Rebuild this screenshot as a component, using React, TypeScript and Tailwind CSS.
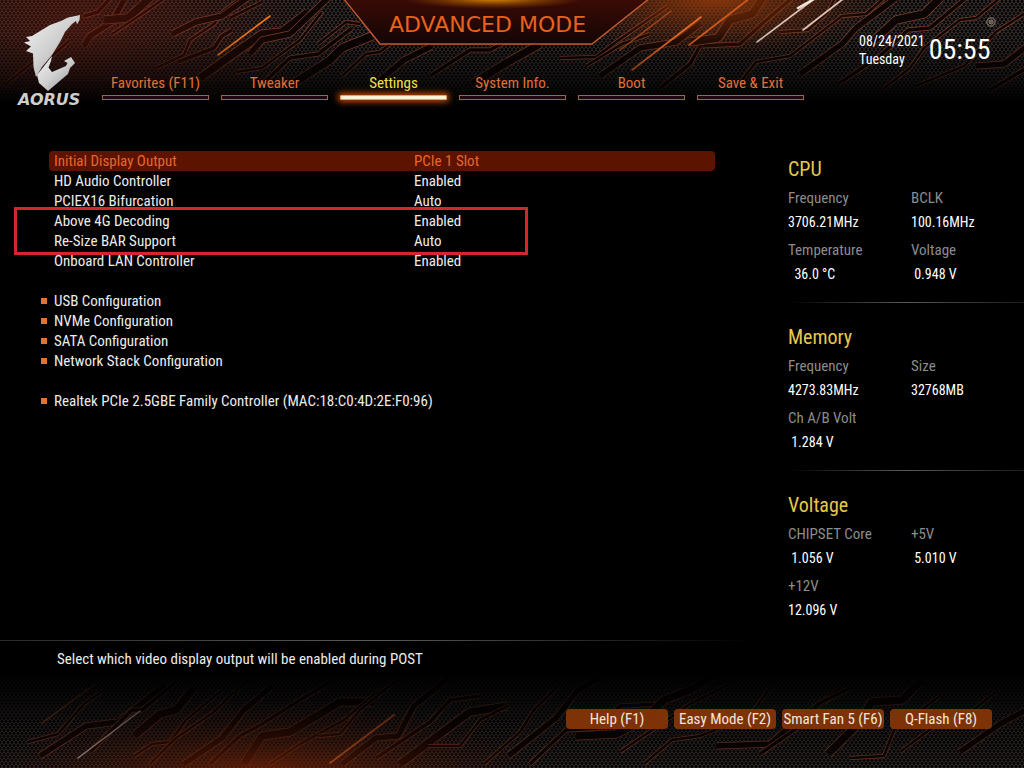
import React from "react";

const tabs = ["Favorites (F11)", "Tweaker", "Settings", "System Info.", "Boot", "Save & Exit"];

const settings = [
  { name: "Initial Display Output", value: "PCIe 1 Slot" },
  { name: "HD Audio Controller", value: "Enabled" },
  { name: "PCIEX16 Bifurcation", value: "Auto" },
  { name: "Above 4G Decoding", value: "Enabled" },
  { name: "Re-Size BAR Support", value: "Auto" },
  { name: "Onboard LAN Controller", value: "Enabled" },
];

const subPages = [
  "USB Configuration",
  "NVMe Configuration",
  "SATA Configuration",
  "Network Stack Configuration",
];

const monitors = [
  {
    title: "CPU",
    items: [
      { label: "Frequency", value: "3706.21MHz" },
      { label: "BCLK", value: "100.16MHz" },
      { label: "Temperature", value: "  36.0 °C" },
      { label: "Voltage", value: " 0.948 V" },
    ],
  },
  {
    title: "Memory",
    items: [
      { label: "Frequency", value: "4273.83MHz" },
      { label: "Size", value: "32768MB" },
      { label: "Ch A/B Volt", value: " 1.284 V" },
    ],
  },
  {
    title: "Voltage",
    items: [
      { label: "CHIPSET Core", value: " 1.056 V" },
      { label: "+5V", value: " 5.010 V" },
      { label: "+12V", value: "12.096 V" },
    ],
  },
];

const actions = ["Help (F1)", "Easy Mode (F2)", "Smart Fan 5 (F6)", "Q-Flash (F8)"];

const headerTraces = [
  "M6 84L38 58L52 56L70 40",
  "M84 46L90 36L112 22L124 0",
  "M84 16L98 12L112 -4",
  "M104 20L128 18L152 -4",
  "M112 34L136 18L168 -4",
  "M156 68L184 55L190 40L214 24L222 12L244 -4",
  "M172 34L196 22L222 16L250 -4",
  "M178 62L214 48L222 36L232 30",
  "M200 78L236 52L262 34L282 32L308 12",
  "M236 72L262 68L300 40L322 12",
  "M230 18L262 2",
  "M250 54L262 40L290 34L330 -4",
  "M262 84L290 58L318 54L352 28",
  "M286 88L330 60L342 48L372 36",
  "M318 44L346 22L360 24",
  "M342 76L366 54L380 52L398 38",
  "M380 80L404 60L432 46",
  "M430 76L470 50L490 50L512 38",
  "M472 84L508 62L540 44",
  "M560 58L596 57L616 42L668 6",
  "M586 66L622 44L650 34",
  "M600 76L640 48L676 42L700 24",
  "M660 88L690 64L700 46L740 44L764 22L792 -2",
  "M690 42L718 38L730 20L752 14L764 -4",
  "M742 80L756 62L790 56L816 36L842 16L866 14L884 -2",
  "M780 32L808 30L828 12L836 -4",
  "M800 74L842 44L856 28L896 -2",
  "M838 84L880 56L908 30L930 28L966 -2",
  "M870 44L896 20L924 14L940 -2",
  "M882 90L910 68L924 48L960 20L976 18L1000 -2",
  "M916 86L964 66L996 32L1030 10",
  "M976 66L1004 64L1030 44",
  "M990 90L1030 66",
];

const footerTraces = [
  "M28 82L58 74L84 44L104 30",
  "M40 96L86 66L118 62L166 24",
  "M90 92L132 50L142 50L176 22",
  "M134 76L160 54L176 50L194 28",
  "M134 96L152 84L170 82L186 60L222 30",
  "M150 104L176 78L214 52L232 34L258 12",
  "M184 104L222 78L244 50L272 26",
  "M210 104L240 76L262 64L300 40L330 22",
  "M244 104L262 76L290 72L340 42L374 42",
  "M270 104L300 84L344 60L372 36L400 20",
  "M318 76L340 74L360 50L392 24",
  "M342 104L376 78L398 76L414 46L434 30L452 14",
  "M376 98L430 62L450 40L480 36",
  "M400 104L440 74L470 52L508 46",
  "M428 86L460 86L480 60L508 46",
  "M484 104L520 72L534 50L560 24",
  "M508 96L556 58L578 30L600 18",
  "M530 104L566 70L598 68L620 46L660 44L700 16",
  "M576 76L616 74L644 60L664 40L690 30L720 12",
  "M620 92L664 62L690 44L730 24",
  "M644 104L672 80L700 76L750 56L770 28",
  "M716 86L770 84L800 58L840 30",
  "M760 94L800 66L818 44L850 28",
  "M828 94L856 66L872 42L902 40L920 22",
  "M850 98L884 96L894 70L940 36",
  "M900 92L940 62L968 54L996 32",
  "M960 92L1000 64L1030 48",
];

type Streak = { d: string; color: string; width: number };

const headerStreaks: Streak[] = [
  { d: "M218 55L270 16", color: "#f07418", width: 1.6 },
  { d: "M620 50L671 11", color: "#a84616", width: 1.4 },
  { d: "M632 70L701 17", color: "#ee6a20", width: 1.6 },
  { d: "M689 45L750 -2", color: "#d45a18", width: 1.6 },
  { d: "M757 42L814 -1", color: "#dcc4b8", width: 1.6 },
  { d: "M798 8L816 -2", color: "#f3e4dc", width: 2.5 },
  { d: "M803 30L843 -1", color: "#dcc4b8", width: 1.6 },
];

const footerStreaks: Streak[] = [
  { d: "M42 63L95 24", color: "#8a3c24", width: 1.4 },
  { d: "M78 98L140 51", color: "#b09c96", width: 1.4 },
  { d: "M330 103L394 55", color: "#b84c1e", width: 2 },
];

function Streaks({ items, id }: { items: Streak[]; id: string }) {
  return (
    <g filter={`url(#${id}-soft)`}>
      {items.map((s) => (
        <path key={s.d} d={s.d} stroke={s.color} strokeWidth={s.width} strokeLinecap="round" fill="none" />
      ))}
    </g>
  );
}

function Defs({ id }: { id: string }) {
  return (
    <>
      <pattern id={`${id}-mesh`} width="4" height="6" patternUnits="userSpaceOnUse">
        <rect width="4" height="6" fill="#3c3432" />
        <ellipse cx="2" cy="1.5" rx="1.5" ry="1.4" fill="#050303" />
        <ellipse cx="0" cy="4.5" rx="1.5" ry="1.4" fill="#050303" />
        <ellipse cx="4" cy="4.5" rx="1.5" ry="1.4" fill="#050303" />
      </pattern>
      <filter id={`${id}-soft`} x="-10%" y="-10%" width="120%" height="120%">
        <feGaussianBlur stdDeviation="0.4" />
      </filter>
    </>
  );
}

const channelWidths = [4, 7, 5, 9, 4];

function Traces({ paths }: { paths: string[] }) {
  return (
    <g fill="none" strokeLinejoin="bevel">
      {paths.map((d, i) => {
        const width = channelWidths[i % channelWidths.length];
        return (
          <g key={d}>
            <path d={d} stroke="#84402a" strokeWidth={width} />
            <path d={d} stroke="#0b0504" strokeWidth={width - 1.4} />
          </g>
        );
      })}
    </g>
  );
}

function HeaderBackdrop() {
  return (
    <svg
      aria-hidden="true"
      viewBox="0 0 1024 108"
      preserveAspectRatio="xMidYMin slice"
      className="pointer-events-none absolute inset-x-0 top-0 -z-10 h-[108px] w-full"
    >
      <defs>
        <Defs id="head" />
        <radialGradient id="head-red" cx="80" cy="20" r="230" gradientUnits="userSpaceOnUse">
          <stop offset="0" stopColor="#6a1a0c" stopOpacity="0.5" />
          <stop offset="1" stopColor="#6a1a0c" stopOpacity="0" />
        </radialGradient>
        <radialGradient id="head-orange" cx="0" cy="0" r="1" gradientUnits="userSpaceOnUse" gradientTransform="translate(715 -4) scale(170 64)">
          <stop offset="0" stopColor="#a84008" stopOpacity="0.8" />
          <stop offset="1" stopColor="#702408" stopOpacity="0" />
        </radialGradient>
        <linearGradient id="head-fade" x1="0" y1="0" x2="0" y2="1">
          <stop offset="0.3" stopColor="#000" stopOpacity="0" />
          <stop offset="0.7" stopColor="#000" stopOpacity="0.5" />
          <stop offset="0.95" stopColor="#000" />
        </linearGradient>
      </defs>
      <rect width="1024" height="108" fill="url(#head-mesh)" />
      <Traces paths={headerTraces} />
      <rect width="1024" height="108" fill="url(#head-red)" />
      <rect width="1024" height="108" fill="url(#head-orange)" />
      <Streaks items={headerStreaks} id="head" />
      <rect width="1024" height="108" fill="url(#head-fade)" />
    </svg>
  );
}

function FooterBackdrop() {
  return (
    <svg
      aria-hidden="true"
      viewBox="0 0 1024 108"
      preserveAspectRatio="xMidYMax slice"
      className="pointer-events-none absolute inset-x-0 bottom-0 -z-10 h-[108px] w-full"
    >
      <defs>
        <Defs id="foot" />
        <radialGradient id="foot-red" cx="0" cy="0" r="1" gradientUnits="userSpaceOnUse" gradientTransform="translate(265 112) scale(270 74)">
          <stop offset="0" stopColor="#8c2806" stopOpacity="0.75" />
          <stop offset="1" stopColor="#5a1804" stopOpacity="0" />
        </radialGradient>
        <linearGradient id="foot-fade" x1="0" y1="0" x2="0" y2="1">
          <stop offset="0.12" stopColor="#000" />
          <stop offset="0.55" stopColor="#000" stopOpacity="0.5" />
          <stop offset="1" stopColor="#000" stopOpacity="0.15" />
        </linearGradient>
      </defs>
      <rect width="1024" height="108" fill="url(#foot-mesh)" />
      <Traces paths={footerTraces} />
      <rect width="1024" height="108" fill="url(#foot-red)" />
      <Streaks items={footerStreaks} id="foot" />
      <rect width="1024" height="108" fill="url(#foot-fade)" />
    </svg>
  );
}

function Logo() {
  return (
    <div className="flex w-[102px] shrink-0 flex-col items-start pt-[14px] pl-[18px]">
      <svg aria-hidden="true" viewBox="0 0 60 78" className="ml-[5px] h-[78px] w-[60px]">
        <defs>
          <linearGradient id="falcon" x1="0" y1="0" x2="1" y2="1">
            <stop offset="0" stopColor="#f4f4f4" />
            <stop offset="0.5" stopColor="#cfcfd0" />
            <stop offset="1" stopColor="#8e8e90" />
          </linearGradient>
        </defs>
        <path
          fill="url(#falcon)"
          d="M57 1L45 3.5L38 7L27 11L9 22L3 23L7 27L1 28.5L8 32.5L3 37L10 39.5L10.5 53L13 63L19 53L29 41L37 28L42 18L49 10L53 7L54 10.5L56.5 6Z"
        />
        <path
          fill="url(#falcon)"
          d="M29 42L14 61L16 69L25 77L45 60L47 54L52 49L48 43L41 47L44.5 49L43 52L29 58L25.5 53.5L28 47Z"
        />
      </svg>
      <span className="font-['DejaVu_Sans',sans-serif] text-[16px] leading-[16px] font-bold text-[#cfcfcf] italic">
        AORUS
      </span>
    </div>
  );
}

function Header() {
  return (
    <header className="flex items-start">
      <Logo />
      <div className="flex-1">
        <div className="pl-[30px]">
          <div className="relative mx-auto h-[48px] w-[304px]">
            <svg aria-hidden="true" viewBox="0 0 304 48" className="absolute inset-0 -z-10 h-full w-full">
              <defs>
                <radialGradient id="plate-glow" cx="0" cy="0" r="1" gradientUnits="userSpaceOnUse" gradientTransform="translate(150 -1) scale(90 10)">
                  <stop offset="0" stopColor="#e08c00" />
                  <stop offset="1" stopColor="#a05000" stopOpacity="0" />
                </radialGradient>
                <linearGradient id="plate" x1="0" y1="0" x2="0" y2="1">
                  <stop offset="0" stopColor="#3c0a04" stopOpacity="0.95" />
                  <stop offset="1" stopColor="#120303" stopOpacity="0.9" />
                </linearGradient>
              </defs>
              <path d="M-1 -2L36 44H248L306 -2Z" fill="url(#plate)" stroke="#c55a30" strokeWidth="1.4" />
              <path d="M1 0H303L288 12H11Z" fill="url(#plate-glow)" />
            </svg>
            <h1 className="pt-3 pr-4 text-center font-['DejaVu_Sans',sans-serif] text-[22px] leading-[26px] whitespace-nowrap text-[#e8621c]">
              ADVANCED MODE
            </h1>
          </div>
        </div>
        <nav className="mt-[25px] flex gap-3">
          {tabs.map((tab) => {
            const active = tab === "Settings";
            return (
              <button
                key={tab}
                type="button"
                aria-current={active ? "page" : undefined}
                className={
                  active
                    ? "flex w-[107px] flex-col gap-[2px] text-[#f2e24a]"
                    : "flex w-[107px] flex-col gap-[2px] text-[#e0703a]"
                }
              >
                <span className="w-full text-center text-[15px] leading-[20px] whitespace-nowrap">{tab}</span>
                <span
                  className={
                    active
                      ? "h-[5px] w-full rounded-[1px] border border-[#ff9a4a] bg-[#fff0dc] shadow-[0_0_6px_2px_#c24a08]"
                      : "h-[5px] w-full border border-[#a8604c] bg-[#1c0a0a]"
                  }
                />
              </button>
            );
          })}
        </nav>
      </div>
      <div className="w-[165px] shrink-0 pt-[17px] text-white">
        <div className="flex justify-end pr-7">
          <button type="button" aria-label="Options" className="text-[#9a8c80]">
            <svg viewBox="0 0 12 12" className="block h-[10px] w-[10px]" fill="none" stroke="currentColor">
              <circle cx="6" cy="6" r="5" strokeWidth="1.2" />
              <circle cx="6" cy="6" r="2.4" strokeWidth="1.2" />
              <circle cx="6" cy="6" r="0.6" fill="currentColor" />
            </svg>
          </button>
        </div>
        <div className="flex items-center gap-1 pt-[5px]">
          <div className="text-[14px] leading-[18px] whitespace-nowrap">
            <div>08/24/2021</div>
            <div>Tuesday</div>
          </div>
          <time className="text-[28px] leading-[36px]">05:55</time>
        </div>
      </div>
    </header>
  );
}

function Bullet() {
  return <span className="h-[6px] w-[6px] shrink-0 bg-[#e2742e]" />;
}

function Settings() {
  return (
    <div className="relative flex-1 pr-[73px] pl-[41px]">
      <div className="pl-2">
        <table className="w-full border-separate border-spacing-0 text-left text-[15px] leading-[20px]">
          <tbody>
            {settings.map((row, i) => (
              <tr key={row.name} className={i === 0 ? "text-[#e8662c]" : "text-[#ececec]"}>
                <th
                  scope="row"
                  className={
                    i === 0
                      ? "w-[365px] rounded-l-[4px] bg-[#5c1300] p-0 pl-[5px] font-normal"
                      : "w-[365px] p-0 pl-[5px] font-normal"
                  }
                >
                  {row.name}
                </th>
                <td className={i === 0 ? "rounded-r-[4px] bg-[#5c1300] p-0" : "p-0"}>{row.value}</td>
              </tr>
            ))}
          </tbody>
        </table>
      </div>
      <div
        aria-hidden="true"
        className="pointer-events-none absolute top-[56px] left-[14px] h-[48px] w-[514px] border-[3px] border-[#d3262e]"
      />
      <ul className="mt-5 text-[15px] leading-[20px] text-[#ececec]">
        {subPages.map((page) => (
          <li key={page}>
            <a href="#" className="flex items-center gap-[7px]">
              <Bullet />
              {page}
            </a>
          </li>
        ))}
        <li className="mt-5">
          <a href="#" className="flex items-center gap-[7px]">
            <Bullet />
            Realtek PCIe 2.5GBE Family Controller (MAC:18:C0:4D:2E:F0:96)
          </a>
        </li>
      </ul>
    </div>
  );
}

function Monitor() {
  return (
    <aside className="w-[236px] shrink-0 pt-1">
      {monitors.map((section, i) => (
        <section key={section.title}>
          {i > 0 && (
            <div className="mt-[16px] mb-[20px] h-px bg-linear-to-r from-transparent via-[#5a5a5a] to-[#1c1c1c]" />
          )}
          <h2 className="text-[20px] leading-[28px] text-[#e8c84a]">{section.title}</h2>
          <dl className="mt-[3px] grid grid-cols-[123px_1fr] gap-y-1 leading-[24px]">
            {section.items.map((item) => (
              <div key={item.label}>
                <dt className="text-[15px] text-[#8c8c8c]">{item.label}</dt>
                <dd className="text-[14px] whitespace-pre text-white">{item.value}</dd>
              </div>
            ))}
          </dl>
        </section>
      ))}
    </aside>
  );
}

export default function App() {
  return (
    <div className="relative isolate flex min-h-screen flex-col bg-black font-['Roboto_Condensed','Ubuntu_Condensed',sans-serif]">
      <HeaderBackdrop />
      <FooterBackdrop />
      <Header />
      <main className="mt-[43px] flex flex-1">
        <Settings />
        <Monitor />
      </main>
      <section aria-label="Help">
        <div className="mr-[269px] h-px bg-linear-to-r from-[#2a2a2a] via-[#5a5a5a] to-transparent" />
        <p className="pt-2 pl-[57px] text-[15px] leading-[20px] text-[#ececec]">
          Select which video display output will be enabled during POST
        </p>
      </section>
      <footer className="flex justify-end gap-[6px] pt-[40px] pr-8 pb-[39px]">
        {actions.map((label) => (
          <button
            key={label}
            type="button"
            className="h-[20px] w-[102px] rounded-[4px] bg-[#8a3608]/90 text-center text-[15px] leading-[20px] whitespace-nowrap text-[#f6e6da]"
          >
            {label}
          </button>
        ))}
      </footer>
    </div>
  );
}
